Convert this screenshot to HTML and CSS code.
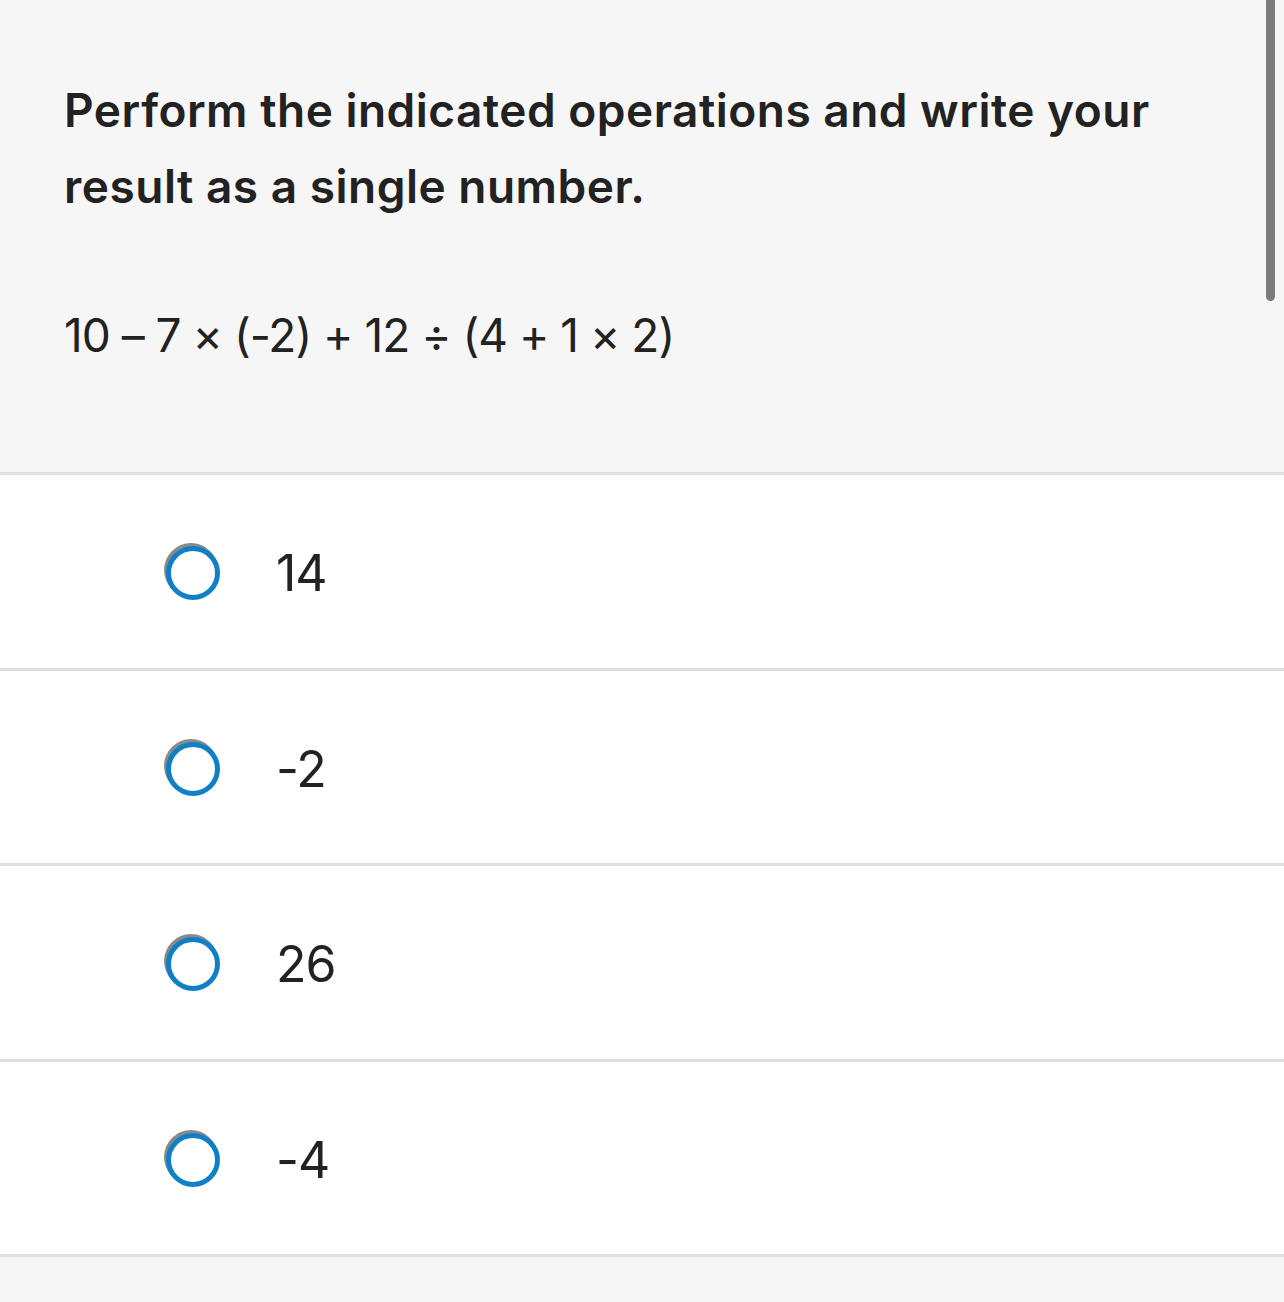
FILE: index.html
```html
<!DOCTYPE html>
<html>
<head>
<meta charset="utf-8">
<link rel="stylesheet" href="styles.css">
</head>
<body>
<div class="page">
  <section class="question">
    <p class="prompt">Perform the indicated operations and write your result as a single number.</p>
    <p class="equation">10 – 7 × (-2) + 12 ÷ (4 + 1 × 2)</p>
  </section>
  <ul class="options">
    <li class="option"><span class="radio"></span><span class="label">14</span></li>
    <li class="option"><span class="radio"></span><span class="label">-2</span></li>
    <li class="option"><span class="radio"></span><span class="label">26</span></li>
    <li class="option"><span class="radio"></span><span class="label">-4</span></li>
  </ul>
  <div class="footer"></div>
  <div class="scrollbar"></div>
</div>
</body>
</html>
```
FILE: styles.css
```css
* { box-sizing: border-box; }
html, body { margin: 0; padding: 0; }
body {
  background: #f6f6f6;
  font-family: "Inter", "Liberation Sans", sans-serif;
  color: #222222;
  font-variant-ligatures: none;
}
.page {
  position: relative;
  width: 1284px;
  height: 1302px;
  overflow: hidden;
  display: flex;
  flex-direction: column;
}
.question {
  background: #f6f6f6;
  height: 475px;
  padding: 72px 100px 0 64px;
  border-bottom: 3px solid #e0dfe4;
}
.prompt {
  margin: 0;
  font-size: 46px;
  line-height: 76px;
  font-weight: 600;
  letter-spacing: 0.5px;
  color: #222222;
}
.equation {
  margin: 73px 0 0;
  font-size: 46px;
  line-height: 76px;
  font-weight: 400;
  letter-spacing: -1px;
  color: #222222;
}
.options {
  list-style: none;
  margin: 0;
  padding: 0;
  background: #ffffff;
}
.option {
  height: 195.5px;
  border-bottom: 3px solid #e0dfe4;
  display: flex;
  align-items: center;
  padding: 4px 0 0 166px;
}
.radio {
  width: 54px;
  height: 54px;
  border-radius: 50%;
  border: 5px solid #1080c6;
  background: #ffffff;
  box-shadow: -2px -3px 0 0 #8a8a8a;
  flex: none;
}
.label {
  margin-left: 56px;
  font-size: 50px;
  line-height: 60px;
  letter-spacing: -1px;
  color: #222222;
}
.footer {
  flex: 1;
  background: #f6f6f6;
}
.scrollbar {
  position: absolute;
  top: 0;
  left: 1266px;
  width: 9px;
  height: 301px;
  background: #7b7b7b;
  border-radius: 0 0 5px 5px;
}
```
